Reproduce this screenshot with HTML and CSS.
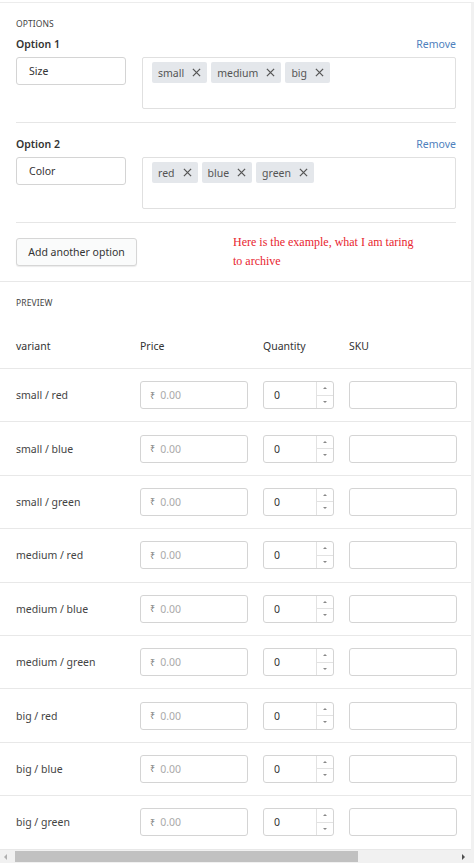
FILE: index.html
```html
<!DOCTYPE html>
<html lang="en">
<head>
    <meta charset="UTF-8">
    <meta name="viewport" content="width=device-width, initial-scale=1.0">
    <title>Product options</title>
    <link rel="stylesheet" href="styles.css">
</head>
<body>
    <div class="panel">
        <section class="options">
            <div class="section-title">OPTIONS</div>

            <div class="option first">
                <div class="option-head">
                    <span class="option-label">Option 1</span>
                    <a class="remove" href="#">Remove</a>
                </div>
                <div class="option-body">
                    <div class="name-input">Size</div>
                    <div class="tag-box">
                        <span class="tag">small <svg viewBox="0 0 10 10"><path d="M1 1L9 9M9 1L1 9"/></svg></span>
                        <span class="tag">medium <svg viewBox="0 0 10 10"><path d="M1 1L9 9M9 1L1 9"/></svg></span>
                        <span class="tag">big <svg viewBox="0 0 10 10"><path d="M1 1L9 9M9 1L1 9"/></svg></span>
                    </div>
                </div>
            </div>

            <div class="option">
                <div class="option-head">
                    <span class="option-label">Option 2</span>
                    <a class="remove" href="#">Remove</a>
                </div>
                <div class="option-body">
                    <div class="name-input">Color</div>
                    <div class="tag-box">
                        <span class="tag">red <svg viewBox="0 0 10 10"><path d="M1 1L9 9M9 1L1 9"/></svg></span>
                        <span class="tag">blue <svg viewBox="0 0 10 10"><path d="M1 1L9 9M9 1L1 9"/></svg></span>
                        <span class="tag">green <svg viewBox="0 0 10 10"><path d="M1 1L9 9M9 1L1 9"/></svg></span>
                    </div>
                </div>
            </div>

            <div class="option-actions">
                <button class="add-btn">Add another option</button>
                <p class="note">Here is the example, what I am taring<br>to archive</p>
            </div>
        </section>

        <section class="preview">
            <div class="section-title">PREVIEW</div>

            <div class="variants">
                <div class="variant-row head">
                    <span>variant</span>
                    <span>Price</span>
                    <span>Quantity</span>
                    <span>SKU</span>
                </div>
            </div>

            <div class="scrollbar">
                <span class="arrow left"></span>
                <span class="thumb"></span>
                <span class="arrow right"></span>
            </div>
        </section>
    </div>

    <script>
        // build the variant rows from the option values
        const sizes = ['small', 'medium', 'big'];
        const colors = ['red', 'blue', 'green'];
        const list = document.querySelector('.variants');

        sizes.forEach(size => {
            colors.forEach(color => {
                const row = document.createElement('div');
                row.className = 'variant-row';
                row.innerHTML =
                    '<span class="variant-name">' + size + ' / ' + color + '</span>' +
                    '<div class="field price"><span class="currency">₹</span><span class="placeholder">0.00</span></div>' +
                    '<div class="field qty"><span class="qty-value">0</span>' +
                        '<span class="spinner"><span class="up"></span><span class="down"></span></span></div>' +
                    '<div class="field sku"></div>';
                list.appendChild(row);
            });
        });
    </script>
</body>
</html>
```

FILE: styles.css
```css
* {
    margin: 0;
    padding: 0;
    box-sizing: border-box;
}

body {
    background: #ffffff;
    font-family: 'Noto Sans', 'Open Sans', sans-serif;
    font-size: 10.5px;
    color: #444;
}

.panel {
    width: 474px;
    margin-top: 2px;
    border-top: 1px solid #ececec;
    border-right: 3px solid #f1f1f1;
}

.section-title {
    font-size: 8.5px;
    line-height: 12px;
    color: #444;
    letter-spacing: 0.1px;
}

/* options */

.options {
    padding: 15px 15px 0 16px;
    border-bottom: 1px solid #e8e8e8;
}

.options .section-title {
    margin-bottom: 6px;
}

.option {
    padding: 13px 0 13px;
    border-bottom: 1px solid #e6e6e6;
}

.option.first {
    padding-top: 0;
}

.option-head {
    display: flex;
    justify-content: space-between;
    align-items: center;
    height: 16px;
    margin-bottom: 5px;
}

.option-label {
    font-size: 10.5px;
    font-weight: 600;
    color: #333;
}

.remove {
    color: #4f81bd;
    text-decoration: none;
    font-size: 10.5px;
}

.option-body {
    display: flex;
    gap: 16px;
    align-items: flex-start;
}

.name-input {
    width: 110px;
    height: 28px;
    border: 1px solid #d4d4d4;
    border-radius: 3px;
    padding: 0 12px;
    line-height: 26px;
    color: #333;
}

.tag-box {
    flex: 1;
    height: 52px;
    border: 1px solid #e0e0e0;
    border-radius: 2px;
    padding: 4px 9px;
    display: flex;
    align-items: flex-start;
    gap: 4px;
}

.tag {
    display: inline-flex;
    align-items: center;
    gap: 8px;
    height: 21px;
    padding: 0 6px;
    background: #e4e7eb;
    border-radius: 2px;
    color: #555;
}

.tag svg {
    width: 9px;
    height: 9px;
    stroke: #555;
    stroke-width: 1.4;
    fill: none;
}

.option-actions {
    display: flex;
    align-items: center;
    padding: 10px 0;
}

.add-btn {
    width: 121px;
    height: 28px;
    border: 1px solid #d6d6d6;
    border-radius: 3px;
    background: #fafbfb;
    box-shadow: 0 1px 1px rgba(0, 0, 0, 0.08);
    font-family: inherit;
    font-size: 10.5px;
    color: #333;
}

.note {
    margin-left: 96px;
    font-family: 'Liberation Serif', serif;
    font-size: 12px;
    line-height: 19px;
    color: #e8252f;
}

/* preview */

.preview .section-title {
    padding: 15px 0 0 16px;
    margin-bottom: 15px;
}

.variant-row {
    display: grid;
    grid-template-columns: 124px 123px 86px 108px;
    align-items: center;
    height: 53.4px;
    padding-left: 16px;
    border-bottom: 1px solid #e8e8e8;
}

.variant-row.head {
    height: 45px;
    color: #333;
}

.variant-name {
    color: #444;
}

.field {
    height: 28px;
    border: 1px solid #d4d4d4;
    border-radius: 3px;
    display: flex;
    align-items: center;
}

.price {
    width: 108px;
    padding-left: 9px;
}

.currency {
    font-size: 9px;
    color: #777;
    margin-right: 5px;
}

.placeholder {
    color: #aaa;
}

.qty {
    width: 71px;
    padding-left: 10px;
    justify-content: space-between;
    align-items: stretch;
}

.qty-value {
    align-self: center;
    color: #333;
}

.spinner {
    width: 17px;
    display: flex;
    flex-direction: column;
    border-left: 1px solid #e2e2e2;
}

.spinner span {
    flex: 1;
    position: relative;
}

.spinner .up {
    border-bottom: 1px solid #e2e2e2;
}

.spinner span::after {
    content: '';
    position: absolute;
    left: 6px;
    top: 5px;
    border-left: 2px solid transparent;
    border-right: 2px solid transparent;
}

.spinner .up::after {
    border-bottom: 2px solid #888;
}

.spinner .down::after {
    border-top: 2px solid #888;
}

.sku {
    width: 108px;
}

.scrollbar {
    height: 13px;
    background: #f1f1f1;
    position: relative;
}

.thumb {
    position: absolute;
    left: 15px;
    top: 1px;
    width: 343px;
    height: 11px;
    background: #c1c1c1;
}

.arrow {
    position: absolute;
    top: 4px;
    border-top: 3px solid transparent;
    border-bottom: 3px solid transparent;
}

.arrow.left {
    left: 4px;
    border-right: 3px solid #b0b0b0;
}

.arrow.right {
    left: 462px;
    border-left: 3px solid #505050;
}
```
